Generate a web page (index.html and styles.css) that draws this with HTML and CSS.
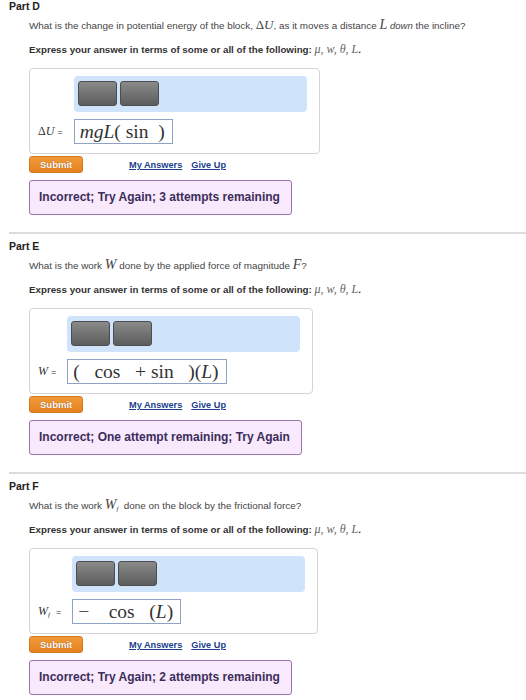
FILE: index.html
```html
<!DOCTYPE html>
<html>
<head>
<meta charset="utf-8">
<link rel="stylesheet" href="styles.css">
</head>
<body>
<div class="page">
  <section class="part">
    <div class="part-title">Part D</div>
    <p class="question">What is the change in potential energy of the block, <span class="m"><span class="up">Δ</span>U</span>, as it moves a distance <span class="m big">L</span> <i>down</i> the incline?</p>
    <p class="express">Express your answer in terms of some or all of the following: <span class="vars">μ, w, θ, L</span>.</p>
    <div class="answer-box">
      <div class="label"></div>
      <div class="toolbar"><span class="tbtn"></span><span class="tbtn"></span></div>
      <div class="label"><span class="up">Δ</span>U <span class="eq">=</span></div>
      <div class="field"><div class="input"><i>mgL</i>( sin&nbsp;&nbsp;)</div></div>
    </div>
    <div class="actions">
      <span class="submit">Submit</span>
      <a class="link first">My Answers</a>
      <a class="link">Give Up</a>
    </div>
    <div class="feedback">Incorrect; Try Again; 3 attempts remaining</div>
  </section>

  <section class="part">
    <div class="part-title">Part E</div>
    <p class="question">What is the work <span class="m big">W</span> done by the applied force of magnitude <span class="m big">F</span>?</p>
    <p class="express">Express your answer in terms of some or all of the following: <span class="vars">μ, w, θ, L</span>.</p>
    <div class="answer-box">
      <div class="label"></div>
      <div class="toolbar"><span class="tbtn"></span><span class="tbtn"></span></div>
      <div class="label">W <span class="eq">=</span></div>
      <div class="field"><div class="input">(&nbsp;&nbsp;&nbsp;cos&nbsp;&nbsp;&nbsp;+ sin&nbsp;&nbsp;&nbsp;)(<i>L</i>)</div></div>
    </div>
    <div class="actions">
      <span class="submit">Submit</span>
      <a class="link first">My Answers</a>
      <a class="link">Give Up</a>
    </div>
    <div class="feedback">Incorrect; One attempt remaining; Try Again</div>
  </section>

  <section class="part last">
    <div class="part-title">Part F</div>
    <p class="question">What is the work <span class="m big">W<sub>f</sub></span>&nbsp; done on the block by the frictional force?</p>
    <p class="express">Express your answer in terms of some or all of the following: <span class="vars">μ, w, θ, L</span>.</p>
    <div class="answer-box">
      <div class="label"></div>
      <div class="toolbar"><span class="tbtn"></span><span class="tbtn"></span></div>
      <div class="label">W<sub>f</sub> &nbsp;<span class="eq">=</span></div>
      <div class="field"><div class="input"><span class="minus">−</span>&nbsp;&nbsp;&nbsp;&nbsp;cos&nbsp;&nbsp;&nbsp;(<i>L</i>)</div></div>
    </div>
    <div class="actions">
      <span class="submit">Submit</span>
      <a class="link first">My Answers</a>
      <a class="link">Give Up</a>
    </div>
    <div class="feedback">Incorrect; Try Again; 2 attempts remaining</div>
  </section>
</div>
</body>
</html>
```

FILE: styles.css
```css
* { box-sizing: border-box; }
body {
  margin: 0;
  background: #fff;
  font-family: "Liberation Sans", Arial, sans-serif;
  color: #333;
}
.page {
  padding-left: 9px;
}
.part {
  border-bottom: 2px solid #dcdcdc;
  padding-bottom: 17px;
  padding-top: 6px;
}
.part:first-child { padding-top: 0; }
.part.last { border-bottom: none; }
.part-title {
  font-size: 10.5px;
  line-height: 12px;
  font-weight: bold;
  color: #222;
}
.question {
  margin: 7px 0 0 20px;
  font-size: 9.9px;
  line-height: 12px;
  color: #444;
}
.question i { font-size: 9.5px; }
.m {
  font-family: "Liberation Serif", "Times New Roman", serif;
  font-style: italic;
  font-size: 13px;
}
.up { font-style: normal; }
.m.big { font-size: 14px; }
.m sub { font-size: 7px; font-style: italic; vertical-align: -2px; line-height: 0; }
.express {
  margin: 11px 0 0 20px;
  font-size: 9.75px;
  line-height: 12px;
  font-weight: bold;
  color: #333;
}
.vars {
  font-family: "Liberation Serif", "Times New Roman", serif;
  font-style: italic;
  font-weight: normal;
  font-size: 12px;
  color: #666;
}
.answer-box {
  margin: 12px 0 0 20px;
  display: inline-grid;
  grid-template-columns: auto 233px;
  row-gap: 7px;
  border: 1px solid #d4d4d4;
  border-radius: 4px;
  padding: 7px 12px 9px 8px;
  align-items: center;
}
.label {
  font-family: "Liberation Serif", "Times New Roman", serif;
  font-style: italic;
  font-size: 12px;
  color: #333;
  padding-right: 11px;
  white-space: nowrap;
}
.label .eq {
  font-family: "Liberation Sans", Arial, sans-serif;
  font-style: normal;
  font-size: 9px;
}
.label sub { font-size: 7px; vertical-align: -2px; line-height: 0; }
.toolbar {
  height: 36px;
  background: #cfe4fb;
  border-radius: 4px;
  padding: 5px 4px;
  display: flex;
  gap: 3px;
}
.tbtn {
  width: 39px;
  height: 25px;
  border-radius: 3px;
  border: 1px solid #4d4d4d;
  background: linear-gradient(#8a8a8a, #5c5c5c);
}
.field { display: flex; }
.input {
  height: 25px;
  border: 1px solid #8ea3c3;
  padding: 0 7px 0 5px;
  font-family: "Liberation Serif", "Times New Roman", serif;
  font-size: 19.5px;
  line-height: 23px;
  color: #333;
  white-space: nowrap;
}
.minus { color: #555; }
.actions {
  margin: 2px 0 0 20px;
  display: flex;
  align-items: center;
}
.submit {
  width: 54px;
  height: 17px;
  border-radius: 3px;
  border: 1px solid #d27a20;
  background: linear-gradient(#f39a3a, #e4821f);
  color: #fff;
  font-size: 9.5px;
  font-weight: bold;
  line-height: 15px;
  padding-left: 10px;
  text-shadow: 0 0 1px #8a4a10;
}
.link {
  font-size: 9.2px;
  font-weight: bold;
  color: #1c3f8c;
  text-decoration: underline;
  margin-right: 9px;
}
.link.first { margin-left: 46px; }
.feedback {
  margin: 7px 0 0 20px;
  display: inline-block;
  height: 35px;
  line-height: 33px;
  padding: 0 11px 0 9px;
  background: #f8e9fc;
  border: 1px solid #9b74ab;
  border-radius: 3px;
  font-size: 12px;
  font-weight: bold;
  color: #3c2d5a;
}
```
